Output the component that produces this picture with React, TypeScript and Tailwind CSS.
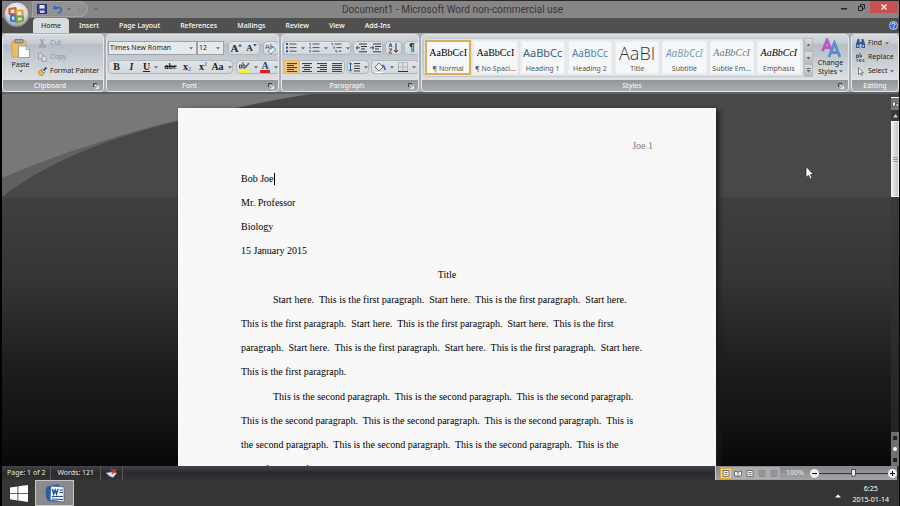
import type { ReactNode } from "react";

const tabs = ["Insert", "Page Layout", "References", "Mailings", "Review", "View", "Add-Ins"];

const styles = [
  { name: "¶ Normal", sample: "AaBbCcI", look: "font-['Liberation_Serif',serif] text-[10px] text-black" },
  { name: "¶ No Spaci...", sample: "AaBbCcI", look: "font-['Liberation_Serif',serif] text-[10px] text-black" },
  { name: "Heading 1", sample: "AaBbCc", look: "text-[11px] text-[#365f91]" },
  { name: "Heading 2", sample: "AaBbCc", look: "text-[10px] text-[#4f81bd]" },
  { name: "Title", sample: "AaBI", look: "font-['Open_Sans',sans-serif] text-[18px] font-light text-[#333]" },
  { name: "Subtitle", sample: "AaBbCcI", look: "text-[10px] italic text-[#7aa0bd]" },
  { name: "Subtle Em...", sample: "AaBbCcI", look: "font-['Liberation_Serif',serif] text-[10px] italic text-[#777]" },
  { name: "Emphasis", sample: "AaBbCcI", look: "font-['Liberation_Serif',serif] text-[10px] italic text-black" },
];

const paragraphs = [
  [
    "Start here.  This is the first paragraph.  Start here.  This is the first paragraph.  Start here.",
    "This is the first paragraph.  Start here.  This is the first paragraph.  Start here.  This is the first",
    "paragraph.  Start here.  This is the first paragraph.  Start here.  This is the first paragraph.  Start here.",
    "This is the first paragraph.",
  ],
  [
    "This is the second paragraph.  This is the second paragraph.  This is the second paragraph.",
    "This is the second paragraph.  This is the second paragraph.  This is the second paragraph.  This is",
    "the second paragraph.  This is the second paragraph.  This is the second paragraph.  This is the",
    "second paragraph.",
  ],
];

function Caret() {
  return (
    <svg viewBox="0 0 4 3" className="h-[3px] w-1 shrink-0">
      <path d="M0 .3h4L2 2.500z" fill="#666" />
    </svg>
  );
}

function Tool({ label, children, caret, on, className = "w-[15px]" }: {
  label: string;
  children: ReactNode;
  caret?: boolean;
  on?: boolean;
  className?: string;
}) {
  return (
    <button
      aria-label={label}
      className={`flex h-full items-center justify-center ${className} ${caret ? "gap-1" : ""} ${
        on ? "bg-[#f3c27a] outline outline-[#e0b474]" : ""
      }`}
    >
      {children}
      {caret && <Caret />}
    </button>
  );
}

function Cluster({ children }: { children: ReactNode }) {
  return (
    <div className="flex h-[14px] items-center rounded-sm border border-[#b0b8be] bg-gradient-to-b from-[#dfe4e8] to-[#d2d9de]">
      {children}
    </div>
  );
}

function Group({ title, launcher, className, children }: {
  title: string;
  launcher?: boolean;
  className: string;
  children: ReactNode;
}) {
  return (
    <section
      className={`flex flex-col overflow-hidden rounded-sm border border-[#e4e8eb] bg-[linear-gradient(#d3d8dc_0,#c8cdd3_8px,#b6bdc5_10px,#dde1e3_45px)] ${className}`}
    >
      <div className="flex h-[45px]">{children}</div>
      <div className="flex h-[11px] items-center bg-gradient-to-b from-[#929698] to-[#a9adae] px-1 text-[#f2f2f2]">
        <h2 className="flex-1 text-center text-[7px] font-medium leading-[10px]">{title}</h2>
        {launcher && (
          <button aria-label={`${title} options`}>
            <svg viewBox="0 0 6 6" className="size-[6px]" fill="none" stroke="#444">
              <path d="M.5 4V.5H4" />
              <path d="M2 2l3 3M5.500 2.500v3h-3" stroke="#eee" />
            </svg>
          </button>
        )}
      </div>
    </section>
  );
}

function Lines({ widths, align = "left" }: { widths: number[]; align?: "left" | "center" | "right" }) {
  return (
    <svg viewBox="0 0 10 9" className="h-[9px] w-[10px]">
      {widths.map((w, i) => (
        <rect
          key={i}
          x={align === "left" ? 0 : align === "center" ? (10 - w) / 2 : 10 - w}
          y={i * 2}
          width={w}
          height="1.1"
          fill="#444"
        />
      ))}
    </svg>
  );
}

function ListIcon({ kind }: { kind: "bullets" | "numbers" | "levels" }) {
  const shift = kind === "levels" ? 2 : 0;
  return (
    <svg viewBox="0 0 11 10" className="h-[10px] w-[11px]">
      {[0, 1, 2].map((i) => (
        <g key={i} transform={`translate(${i * shift} ${i * 3.6})`}>
          {kind === "bullets" ? (
            <rect width="2" height="2" fill="#2f5597" />
          ) : (
            <path d="M.3.3h1v2" fill="none" stroke="#2f5597" strokeWidth=".9" />
          )}
          <rect x="3.5" y=".5" width={7 - i * shift} height="1" fill="#555" />
        </g>
      ))}
    </svg>
  );
}

function IndentIcon({ right }: { right?: boolean }) {
  return (
    <svg viewBox="0 0 11 10" className="h-[10px] w-[11px]" fill="none" stroke="#333">
      <path d="M3 1h8M5 3.500h6M5 6h4M3 8.800h8" />
      <path d={right ? "M0 4.8h4M2 3l2 1.8L2 6.6" : "M4 4.8H0M2 3L0 4.8l2 1.8"} stroke="#2f5597" />
    </svg>
  );
}

function ClipboardGroup() {
  return (
    <Group title="Clipboard" launcher className="w-[102px]">
      <button className="flex w-[35px] flex-col items-center pt-[3px] leading-[10px] text-[#222]">
        <svg viewBox="0 0 20 20" className="size-5">
          <path d="M1 3h14v16H1z" fill="#edbd62" stroke="#d3a04c" />
          <path d="M4 1.500h8V5H4z" fill="#a6a8aa" stroke="#666" strokeWidth=".7" />
          <path d="M7.500 8h7.500l3.500 3.500v8h-11z" fill="#fff" stroke="#8092a8" strokeWidth=".8" />
          <path d="M15 8v3.500h3.500" fill="#d6deea" stroke="#8092a8" strokeWidth=".8" />
        </svg>
        <span className="pt-[2px]">Paste</span>
        <Caret />
      </button>
      <div className="flex flex-col items-start gap-1 pt-[3px] leading-[10px] text-[#8d9298]">
        <button className="flex items-center gap-[3px]">
          <svg viewBox="0 0 9 9" className="size-[9px]" fill="none" stroke="currentColor">
            <path d="M2 0l3.500 6M5.500 0L3 6" />
            <circle cx="2.500" cy="7.300" r="1.200" />
            <circle cx="6.500" cy="7.300" r="1.200" />
          </svg>
          Cut
        </button>
        <button className="flex items-center gap-[3px]">
          <svg viewBox="0 0 9 9" className="size-[9px]" fill="#d5d9de" stroke="currentColor" strokeWidth=".8">
            <path d="M.5.5h3l1.500 1.500v4H.5z" />
            <path d="M4 3h3l1.500 1.500v4H4z" />
          </svg>
          Copy
        </button>
        <button className="flex items-center gap-[3px] whitespace-nowrap text-[#222]">
          <svg viewBox="0 0 9 9" className="size-[9px]">
            <path d="M0 5l3-2 3 3-2 3C2 9 0 7 0 5z" fill="#efb93f" stroke="#9a6d1d" strokeWidth=".5" />
            <path d="M3 3l1.500-1 2.500 2.500L6 6z" fill="#eee" stroke="#555" strokeWidth=".6" />
            <path d="M5.500 3.500L8.500.5" stroke="#2a3f78" strokeWidth="1.600" />
          </svg>
          Format Painter
        </button>
      </div>
    </Group>
  );
}

function FontGroup() {
  return (
    <Group title="Font" launcher className="w-[173px]">
      <div className="flex flex-col gap-[5px] pl-px pt-[6px] font-['Liberation_Serif',serif] text-[10px] leading-[12px] text-[#222]">
        <div className="flex h-[14px] items-center">
          {[
            { label: "Font name", value: "Times New Roman", width: "w-[89px]" },
            { label: "Font size", value: "12", width: "w-[27px]" },
          ].map((box) => (
            <div key={box.label} className={`relative border border-[#9aa3ab] bg-[#e6e9eb] ${box.width}`}>
              <select
                aria-label={box.label}
                className="block h-3 w-full appearance-none pl-px font-['Noto_Sans',sans-serif] text-[7px] leading-[12px]"
              >
                <option>{box.value}</option>
              </select>
              <div className="pointer-events-none absolute inset-y-0 right-[3px] flex items-center">
                <Caret />
              </div>
            </div>
          ))}
          <div className="flex gap-[3px] pl-1">
            <Cluster>
              <Tool label="Grow font">
                <b className="text-[11px]">A</b>
                <svg viewBox="0 0 4 8" className="h-2 w-1"><path d="M0 2.500h4L2 0z" fill="#2f5597" /></svg>
              </Tool>
              <Tool label="Shrink font">
                <b className="text-[9px]">A</b>
                <svg viewBox="0 0 4 8" className="h-2 w-1"><path d="M0 0h4L2 2.500z" fill="#2f5597" /></svg>
              </Tool>
            </Cluster>
            <Cluster>
              <Tool label="Clear formatting" className="w-[14px]">
                <svg viewBox="0 0 12 11" className="h-[11px] w-3" fill="none">
                  <path d="M1 6V3l1.500-1L4 3v3M1 4.500h3M6 1v5h2V3.500H6" stroke="#556" strokeWidth=".8" />
                  <path d="M3 8l5-4 3 2.500-4 4H5z" fill="#e7edf7" stroke="#6d8bbd" />
                </svg>
              </Tool>
            </Cluster>
          </div>
        </div>
        <div className="flex h-[14px] gap-[3px]">
          <Cluster>
            <Tool label="Bold"><b>B</b></Tool>
            <Tool label="Italic"><b className="italic">I</b></Tool>
            <Tool label="Underline" caret className="w-[23px]"><b className="underline">U</b></Tool>
            <Tool label="Strikethrough" className="w-[17px]"><b className="text-[8px] line-through">abc</b></Tool>
            <Tool label="Subscript" className="w-4"><b>x</b><sub className="text-[6px] text-[#2f5597]">2</sub></Tool>
            <Tool label="Superscript" className="w-4"><b>x</b><sup className="text-[6px] text-[#2f5597]">2</sup></Tool>
            <Tool label="Change case" caret className="w-[21px]"><b>Aa</b></Tool>
          </Cluster>
          <Cluster>
            <Tool label="Highlight" caret className="w-[21px]">
              <svg viewBox="0 0 12 12" className="size-3" fill="none">
                <path d="M1 8.500h10V12H1z" fill="#f4f03c" />
                <path d="M1.500 4h2v3h-2zM5 1v6h2V4H5" stroke="#333" strokeWidth=".9" />
                <path d="M7 7l4-5" stroke="#6c6f73" strokeWidth="1.800" />
              </svg>
            </Tool>
            <Tool label="Font colour" caret className="w-[22px]">
              <span className="h-3 w-[10px] border-b-[3px] border-[#d5202a] text-center text-[10px] font-bold leading-[10px] text-[#28437c]">A</span>
            </Tool>
          </Cluster>
        </div>
      </div>
    </Group>
  );
}

function ParagraphGroup() {
  return (
    <Group title="Paragraph" launcher className="w-[138px]">
      <div className="flex flex-col gap-[5px] pl-px pt-[6px]">
        <div className="flex gap-[2px]">
          <Cluster>
            <Tool label="Bullets" caret className="w-[23px]"><ListIcon kind="bullets" /></Tool>
            <Tool label="Numbering" caret className="w-[23px]"><ListIcon kind="numbers" /></Tool>
            <Tool label="Multilevel list" caret className="w-5"><ListIcon kind="levels" /></Tool>
          </Cluster>
          <Cluster>
            <Tool label="Decrease indent" className="w-[14px]"><IndentIcon /></Tool>
            <Tool label="Increase indent" className="w-[14px]"><IndentIcon right /></Tool>
          </Cluster>
          <Cluster>
            <Tool label="Sort">
              <svg viewBox="0 0 11 12" className="h-3 w-[11px]" fill="none">
                <path d="M1 5l1.500-4L4 5M1.500 4h2" stroke="#2f5597" />
                <path d="M1 7h3L1 11h3" stroke="#8a3a3a" />
                <path d="M8 1v9M6 8l2 2.500L10 8" stroke="#333" />
              </svg>
            </Tool>
          </Cluster>
          <Cluster>
            <Tool label="Show marks" className="w-[14px]">
              <b className="font-['Liberation_Sans',sans-serif] text-[10px] leading-[12px] text-[#333]">¶</b>
            </Tool>
          </Cluster>
        </div>
        <div className="flex gap-[2px]">
          <Cluster>
            <Tool label="Align left" on><Lines widths={[10, 7, 10, 7, 10]} /></Tool>
            <Tool label="Center"><Lines widths={[10, 6, 10, 6, 10]} align="center" /></Tool>
            <Tool label="Align right"><Lines widths={[10, 7, 10, 7, 10]} align="right" /></Tool>
            <Tool label="Justify"><Lines widths={[10, 10, 10, 10, 10]} /></Tool>
          </Cluster>
          <Cluster>
            <Tool label="Line spacing" caret className="w-5">
              <svg viewBox="0 0 11 10" className="h-[10px] w-[11px]" fill="none">
                <path d="M1.500 1v8M0 2.500L1.500.800 3 2.500M0 7.500l1.500 1.700L3 7.500" stroke="#2f5597" />
                <path d="M5 1.500h6M5 4h6M5 6.500h6M5 9h6" stroke="#444" />
              </svg>
            </Tool>
          </Cluster>
          <Cluster>
            <Tool label="Shading" caret className="w-[23px]">
              <svg viewBox="0 0 12 11" className="h-[11px] w-3" fill="none">
                <path d="M1 5l4-4 4 4-4 4z" fill="#eef2f6" stroke="#777" />
                <path d="M8 3c3 1 3 3 3 5" stroke="#4674b8" strokeWidth="1.800" />
                <path d="M1 10.500h8" stroke="#fff" />
              </svg>
            </Tool>
            <Tool label="Borders" caret className="w-[23px]">
              <svg viewBox="0 0 10 10" className="size-[10px]" fill="none">
                <path d="M.5.5h9v9h-9zM5 .5v9M.5 5h9" stroke="#8b9299" strokeDasharray="1 1" />
                <path d="M0 9.500h10" stroke="#333" />
              </svg>
            </Tool>
          </Cluster>
        </div>
      </div>
    </Group>
  );
}

function StylesGroup() {
  return (
    <Group title="Styles" launcher className="min-w-0 flex-1">
      <div className="flex min-w-0 flex-1 py-[3px] pl-px">
        <div className="flex min-w-0 flex-1 gap-px rounded-sm border border-[#c3c9ce] bg-[#dfe3e6] p-px">
          {styles.map((style, i) => (
            <button
              key={style.name}
              className={`flex min-w-0 flex-1 flex-col items-center overflow-hidden whitespace-nowrap border-2 bg-[#f6f7f8] ${
                i === 0 ? "border-[#dcae55]" : "border-[#e9ecee]"
              }`}
            >
              <span className={`flex h-[22px] items-center leading-[20px] ${style.look}`}>{style.sample}</span>
              <span className="leading-[9px] text-[#555]">{style.name}</span>
            </button>
          ))}
        </div>
        <div className="flex w-[9px] flex-col">
          {["Row up", "Row down", "More styles"].map((label, i) => (
            <button
              key={label}
              aria-label={label}
              className="flex flex-1 items-center justify-center border border-[#b3b9be] bg-gradient-to-b from-[#dadee1] to-[#b5bbc0]"
            >
              <svg viewBox="0 0 5 5" className="size-[5px]" fill="#666">
                {i === 0 && <path d="M.5 4h4l-2-2.500z" />}
                {i > 0 && <path d="M.5 2h4l-2 2.500z" />}
                {i === 2 && <path d="M.5 0h4v1h-4z" />}
              </svg>
            </button>
          ))}
        </div>
      </div>
      <button className="flex w-[35px] flex-col items-center pt-[3px] leading-[9px] text-[#222]">
        <svg viewBox="0 0 20 20" className="size-5" fill="none" strokeWidth="2.800">
          <path d="M1.500 13L6 2l4.500 11M3 9.500h6" stroke="#b45cc6" />
          <path d="M8 19l5.500-14L19 19M10 14.500h7" stroke="#5a8dcc" />
        </svg>
        Change
        <span className="flex items-center gap-[2px]">Styles <Caret /></span>
      </button>
    </Group>
  );
}

function EditingGroup() {
  return (
    <Group title="Editing" className="w-[48px]">
      <div className="flex flex-col items-start gap-1 pl-1 pt-[3px] leading-[10px] text-[#222]">
        <button className="flex items-center gap-[3px]">
          <svg viewBox="0 0 9 9" className="size-[9px]" fill="#35568f">
            <path d="M1.500 0h2v3h2V0h2L9 5v4H5.500V5h-2v4H0V5z" />
            <path d="M1 6h1.500v2H1zM6.500 6H8v2H6.500z" fill="#a9c1e6" />
          </svg>
          Find <Caret />
        </button>
        <button className="flex items-center gap-[3px]">
          <svg viewBox="0 0 9 9" className="size-[9px]" fill="none" stroke="#444" strokeWidth=".9">
            <path d="M.5 2h2v2.500h-2zM4 0v4h1.500V2" />
            <path d="M3.500 6.500v2h1.500v-2zM8.500 6.500H7v2h1.500" stroke="#2f7a46" />
            <path d="M1 5.500V8h1.500" stroke="#2f5597" />
          </svg>
          Replace
        </button>
        <button className="flex items-center gap-[3px]">
          <svg viewBox="0 0 9 9" className="size-[9px]">
            <path d="M2.500.5v7l1.700-1.500L5.500 8.500l1-.5L5.400 5.700h2z" fill="#fff" stroke="#555" strokeWidth=".7" />
          </svg>
          Select <Caret />
        </button>
      </div>
    </Group>
  );
}

function TitleBar() {
  return (
    <header className="flex h-[18px] items-start border-t border-[#2b2829] bg-[#868686] pl-[30px]">
      <div className="flex h-4 w-14 items-center gap-[6px] rounded-r-full border border-[#a2a2a2] bg-[#929295] pl-1">
        <button aria-label="Save">
          <svg viewBox="0 0 10 10" className="size-[10px]">
            <path d="M.5.5h9v9h-9z" fill="#3a3f9c" stroke="#26296b" />
            <path d="M2.500 1h5v3.500h-5z" fill="#e6e9f5" />
            <path d="M3 6.500h4.500V9H3z" fill="#c9cde4" />
          </svg>
        </button>
        <button aria-label="Undo" className="flex items-center gap-1">
          <svg viewBox="0 0 10 9" className="h-[9px] w-[10px]" fill="none">
            <path d="M2 3.500c4-2.500 7-.5 6 2.500-.4 1.200-1.500 2-3 2.300" stroke="#3564c2" strokeWidth="1.600" />
            <path d="M0 4.500L1 0l4 4z" fill="#3564c2" />
          </svg>
          <Caret />
        </button>
        <button aria-label="Repeat">
          <svg viewBox="0 0 9 9" className="size-[9px]" fill="none" stroke="#808085">
            <path d="M7 1.500v4a3 3 0 01-5.500 0v-2" />
          </svg>
        </button>
      </div>
      <button aria-label="Customize toolbar" className="flex h-4 items-center px-[6px]"><Caret /></button>
      <h1 className="flex-1 pr-[34px] text-center font-[Roboto,sans-serif] text-[10px] leading-[17px] text-[#383838]">
        Document1 - Microsoft Word non-commercial use
      </h1>
      <div className="flex h-3 items-center pr-px">
        <button aria-label="Minimize" className="flex w-[17px] justify-center">
          <svg viewBox="0 0 6 6" className="size-[6px]"><path d="M0 4h6v1.500H0z" fill="#222" /></svg>
        </button>
        <button aria-label="Restore" className="flex w-[18px] justify-center">
          <svg viewBox="0 0 7 7" className="size-[7px]" fill="none" stroke="#222">
            <path d="M.5 2.500h4v4h-4zM2.500 2V.5h4v4H5" />
          </svg>
        </button>
        <button aria-label="Close" className="flex h-3 w-7 items-center justify-center bg-[#c94f50]">
          <svg viewBox="0 0 6 6" className="size-[6px]" stroke="#fff" strokeWidth="1.400"><path d="M.5.5l5 5M5.500.5l-5 5" /></svg>
        </button>
      </div>
    </header>
  );
}

function OfficeButton() {
  return (
    <button aria-label="Office menu" className="absolute left-px top-px z-10 size-[27px]">
      <svg viewBox="0 0 27 27">
        <defs>
          <radialGradient id="orb" cx=".5" cy=".35" r=".65">
            <stop offset="0" stopColor="#fdfdfd" />
            <stop offset=".65" stopColor="#d3d5d8" />
            <stop offset="1" stopColor="#8c8f93" />
          </radialGradient>
        </defs>
        <circle cx="13.500" cy="13.500" r="12.500" fill="url(#orb)" stroke="#6d6f72" strokeWidth=".8" />
        <g fill="none" strokeWidth="2.200" strokeLinejoin="round">
          <path d="M12.500 13H6.500V8l6-1z" stroke="#dd5a26" />
          <path d="M13.500 9.500h6v6h-6z" stroke="#e8a02c" />
          <path d="M12.500 14.500v6l-4.500-1v-5z" stroke="#3e79c5" />
          <path d="M14 15.500h6v4l-6 2z" stroke="#77a43c" />
        </g>
      </svg>
    </button>
  );
}

function Scrollbar() {
  return (
    <div className="flex w-2 shrink-0 flex-col bg-[#444]">
      <button aria-label="Toggle ruler" className="mt-[3px] flex h-[13px] items-center justify-center border-t border-white bg-[#77787b]">
        <svg viewBox="0 0 7 7" className="size-[7px]" fill="#eee" stroke="#333" strokeWidth=".6">
          <path d="M.5 1h3v4h-3zM3 3h3.500v3.500z" />
        </svg>
      </button>
      <button aria-label="Scroll up" className="flex h-[11px] items-center justify-center bg-[#3a3a3a]">
        <svg viewBox="0 0 5 4" className="h-1 w-[5px]"><path d="M0 3.500h5L2.500 0z" fill="#ccc" /></svg>
      </button>
      <div className="flex h-[76px] flex-col items-center justify-center gap-px border border-[#f2f2f2] bg-gradient-to-r from-[#eee] to-[#c4c4c4]">
        <i className="h-px w-[5px] bg-[#999]" />
        <i className="h-px w-[5px] bg-[#999]" />
        <i className="h-px w-[5px] bg-[#999]" />
      </div>
      <div className="flex-1 bg-gradient-to-b from-[#3b3b3b] to-[#232323]" />
      <div className="flex h-[34px] flex-col items-center justify-around bg-[#6f6f71]">
        <button aria-label="Previous page" className="size-1 border-y-2 border-[#222]" />
        <button aria-label="Browse object" className="size-1 rounded-full bg-white" />
        <button aria-label="Next page" className="size-1 border-y-2 border-[#222]" />
      </div>
    </div>
  );
}

function Workspace() {
  return (
    <main className="flex min-h-0 flex-1">
      <div className="relative flex min-w-0 flex-1 justify-center overflow-hidden bg-[linear-gradient(#484848_0,#484848_103px,#404040_103px,#343434_190px,#1e1e1e_270px,#101111_340px,#070909_372px)]">
        <svg viewBox="0 0 320 104" className="absolute left-0 top-0 h-[104px] w-80">
          <path d="M0 0H310C260 8 220 17 177 27 120 40 50 64 0 103z" fill="#606060" />
          <path d="M0 0H306C258 8 220 16 177 26 130 37 60 58 0 84z" fill="#787878" />
        </svg>
        <article className="relative ml-px mt-[14px] h-[700px] w-[538px] bg-[#f8f8f8] px-[63px] pt-[26px] font-['Liberation_Serif',serif] text-[10px] leading-[24px] text-black shadow-[3px_2px_5px_#1c1c1c]">
          <p className="text-right text-[#808080]">Joe 1</p>
          <div className="mt-[9px]">
            <p className="flex items-center">Bob Joe<span className="h-3 w-px bg-black" /></p>
            <p>Mr. Professor</p>
            <p>Biology</p>
            <p>15 January 2015</p>
          </div>
          <div className="flex flex-col gap-px">
            <h2 className="text-center">Title</h2>
            {paragraphs.map((lines, i) => (
              <p key={i} className="whitespace-pre indent-8">{lines.join("\n")}</p>
            ))}
          </div>
        </article>
        <svg viewBox="0 0 9 14" className="absolute right-[77px] top-[72px] h-[14px] w-[9px]">
          <path d="M1 .5v11l2.500-2.300L5.200 13l1.800-.8-1.600-3.700H8.500z" fill="#fff" stroke="#222" strokeWidth=".7" />
        </svg>
      </div>
      <Scrollbar />
    </main>
  );
}

function StatusBar() {
  return (
    <footer className="flex h-[14px] items-stretch bg-gradient-to-b from-[#43444b] via-[#29292b] to-[#333] leading-[14px] text-[#e8e8e8]">
      <span className="border-r border-[#555] px-[5px]">Page: 1 of 2</span>
      <span className="border-r border-[#555] px-[6px]">Words: 121</span>
      <button aria-label="Proofing errors" className="flex w-[22px] items-center justify-center border-r border-[#555]">
        <svg viewBox="0 0 12 10" className="h-[10px] w-3">
          <path d="M0 5l5-1 6 1-4 4.500-3-1z" fill="#dfe3f3" stroke="#7b82a6" strokeWidth=".6" />
          <path d="M5 1l5 4M10 1L6 6" stroke="#c8452f" strokeWidth="1.500" />
        </svg>
      </button>
      <div className="ml-auto flex w-[182px] items-center border-l border-[#ccc] bg-gradient-to-b from-[#85868a] to-[#a3a4a8] pl-1">
        <div className="flex h-3 w-[60px] items-center bg-[#adadaf]">
          {["Print layout", "Full screen reading", "Web layout", "Outline", "Draft"].map((view, i) => (
            <button
              key={view}
              aria-label={view}
              className={`flex h-[11px] w-3 items-center justify-center ${i === 0 ? "border border-[#e0a63e] bg-[#f7d795]" : ""}`}
            >
              <svg viewBox="0 0 8 7" className="h-[7px] w-2" fill={i < 3 ? "#f3f3f3" : "#9a9a9c"} stroke={i < 3 ? "#555" : "#88898b"} strokeWidth=".8">
                {i === 1 ? <path d="M.5 1L4 2l3.500-1v4.500L4 6.500l-3.500-1zM4 2v4" /> : <path d="M1 .5h6v6H1zM2.500 2.500h3M2.500 4.500h3" />}
              </svg>
            </button>
          ))}
        </div>
        <button className="w-[30px] text-center">100%</button>
        <button aria-label="Zoom out" className="flex size-[9px] shrink-0 items-center justify-center rounded-full bg-[#eee]">
          <i className="h-px w-[5px] bg-black" />
        </button>
        <input
          type="range"
          aria-label="Zoom"
          defaultValue={50}
          className="h-[9px] min-w-0 flex-1 appearance-none bg-[linear-gradient(#333,#333)] bg-[length:100%_1px] bg-center bg-no-repeat [&::-webkit-slider-thumb]:h-2 [&::-webkit-slider-thumb]:w-[5px] [&::-webkit-slider-thumb]:appearance-none [&::-webkit-slider-thumb]:rounded-b-full [&::-webkit-slider-thumb]:border [&::-webkit-slider-thumb]:border-[#444] [&::-webkit-slider-thumb]:bg-[#eee]"
        />
        <button aria-label="Zoom in" className="flex size-[9px] shrink-0 items-center justify-center rounded-full bg-[#eee]">
          <svg viewBox="0 0 5 5" className="size-[5px]" stroke="#000"><path d="M0 2.500h5M2.500 0v5" /></svg>
        </button>
      </div>
      <div className="w-[2px] bg-[#333]" />
    </footer>
  );
}

function Taskbar() {
  return (
    <nav className="flex h-[26px] items-stretch bg-[#363636] text-white">
      <button aria-label="Start" className="flex w-[33px] items-center justify-center">
        <svg viewBox="0 0 18 17" className="h-[17px] w-[18px]" fill="#fff">
          <path d="M0 2.500l7.500-1.100V8H0zM8.300 1.300L18 0v8H8.300zM0 8.800h7.500v6.600L0 14.300zM8.300 8.800H18V17l-9.700-1.400z" />
        </svg>
      </button>
      <button aria-label="Microsoft Word" className="flex w-[39px] items-center justify-center border border-[#c5c5c5] bg-[#8b8b8b]">
        <svg viewBox="0 0 20 19" className="h-[19px] w-5">
          <path d="M2 2.500L14 0l-1 18-10-1C0 13 0 6 2 2.500z" fill="#2c5ba7" />
          <path d="M6 2l13 1v15L5 16z" fill="#f3f6fb" stroke="#2c5ba7" strokeWidth=".7" />
          <path d="M7.500 5l1.200 5 1.500-4 1.300 4 1.500-5" fill="none" stroke="#234f9a" strokeWidth="1.400" />
          <path d="M14.500 6H18M14.500 8.500H18M7 12.500h11M7 15l11 .6" stroke="#234f9a" />
        </svg>
      </button>
      <div className="ml-auto flex items-center gap-[11px] pr-[10px]">
        <button aria-label="Show hidden icons" className="pt-[6px]">
          <svg viewBox="0 0 6 4" className="h-1 w-[6px]"><path d="M0 3.500h6L3 .5z" fill="#fff" /></svg>
        </button>
        <div className="pt-px text-center leading-[11px]">
          <p>6:25</p>
          <p>2015-01-14</p>
        </div>
      </div>
    </nav>
  );
}

export default function App() {
  return (
    <div className="relative flex h-screen flex-col overflow-hidden border-l-2 border-r border-black bg-[#505050] font-['Noto_Sans',sans-serif] text-[7px]">
      <OfficeButton />
      <TitleBar />
      <nav className="flex h-[15px] items-stretch pl-[31px] font-medium leading-[16px] text-white">
        <button className="w-9 rounded-t-sm bg-[#d8dcdf] text-[#333]">Home</button>
        {tabs.map((tab) => (
          <button key={tab} className="px-[10px]">{tab}</button>
        ))}
        <button aria-label="Help" className="ml-auto mr-px flex items-center">
          <svg viewBox="0 0 9 9" className="size-[9px]">
            <circle cx="4.500" cy="4.500" r="4" fill="#3467c8" stroke="#dfe8fa" strokeWidth=".8" />
            <path d="M3 3.500c0-2 3-2 3 0 0 1-1.500 1-1.500 2M4.500 6.300v1" fill="none" stroke="#fff" />
          </svg>
        </button>
      </nav>
      <div className="flex gap-[2px] border-b-2 border-[#5f6164] bg-[#a9afb4] pt-px">
        <ClipboardGroup />
        <FontGroup />
        <ParagraphGroup />
        <StylesGroup />
        <EditingGroup />
      </div>
      <Workspace />
      <StatusBar />
      <Taskbar />
    </div>
  );
}
